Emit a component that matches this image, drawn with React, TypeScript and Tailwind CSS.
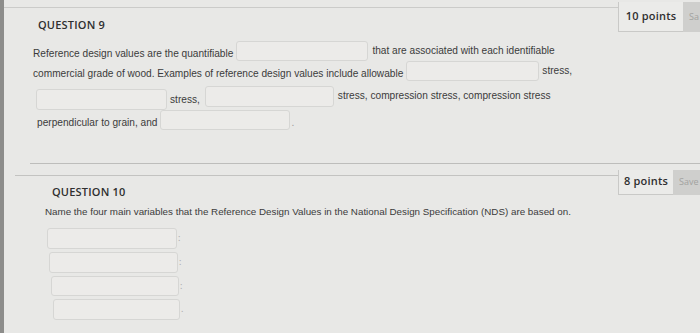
import React from 'react';

const font = "font-['Liberation_Sans',Arial,sans-serif] text-[#3b3b3b] whitespace-nowrap";
const head = "font-['Open_Sans',sans-serif] font-semibold text-[11px] text-[#2f2f2f] tracking-[0.2px]";

function Blank({ w = 'w-[132px]', h = 'h-[20px]' }: { w?: string; h?: string }) {
  return <span className={`inline-block shrink-0 ${w} ${h} rounded-[3px] border border-[#d6d6d4] bg-[#ecebe9]`} />;
}

function Points({ label, save, box, h }: { label: string; save: string; box: string; h: string }) {
  return (
    <div className={`flex ${h} items-stretch`}>
      <div className={`flex ${box} items-center justify-center border-b border-l border-[#c9c9c7] bg-[#ebebe9] ${head} text-[10.5px]`}>
        {label}
      </div>
      <div className="flex min-w-0 flex-1 items-center overflow-hidden bg-[#cfcfcd] pl-[6px] font-['Open_Sans',sans-serif] text-[9px] text-[#a2a2a0]">
        {save}
      </div>
    </div>
  );
}

export default function App() {
  return (
    <div className="flex h-[333px] w-[700px] overflow-hidden bg-[#e8e8e6]">
      <div className="w-[4px] shrink-0 bg-[#8d8d8b]" />
      <div className="flex flex-1 flex-col">
        {/* question 9 */}
        <section className="mt-[7px] border-t border-[#cbcbc9]">
          <div className="flex items-start">
            <div className={`${head} pl-[34px] pt-[9px]`}>QUESTION 9</div>
            <div className="ml-auto -mt-[6px] w-[82px]">
              <Points label="10 points" save="Sa" box="w-[65px]" h="h-[30px]" />
            </div>
          </div>
          <div className={`${font} text-[10.15px] pl-[29px] pt-[10px]`}>
            <div className="flex h-[20px] items-center">
              <span>Reference design values are the quantifiable</span>
              <span className="ml-[3px]"><Blank /></span>
              <span className="ml-[4px] -mt-[6px]">that are associated with each identifiable</span>
            </div>
            <div className="flex h-[20px] items-center">
              <span>commercial grade of wood. Examples of reference design values include allowable</span>
              <span className="ml-[3px]"><Blank w="w-[133px]" /></span>
              <span className="ml-[3px] -mt-[5px]">stress,</span>
            </div>
            <div className="mt-[5px] flex h-[21px] items-center pl-[3px]">
              <Blank w="w-[131px]" h="h-[21px]" />
              <span className="ml-[3px] mt-[2px]">stress,</span>
              <span className="ml-[5px]"><Blank w="w-[129px]" h="h-[21px]" /></span>
              <span className="ml-[4px] -mt-[6px]">stress, compression stress, compression stress</span>
            </div>
            <div className="mt-[3px] flex h-[20px] items-center pl-[4px]">
              <span>perpendicular to grain, and</span>
              <span className="ml-[3px]"><Blank w="w-[130px]" /></span>
              <span className="ml-[1px] text-[#9a9a9a]">.</span>
            </div>
          </div>
          <div className="ml-[26px] mt-[30px] border-t border-[#bdbdbb]" />
        </section>

        {/* question 10 */}
        <section className="mt-[11px] ml-[11px] border-t border-[#c3c3c1]">
          <div className="flex items-start">
            <div className={`${head} pl-[37px] pt-[8px]`}>QUESTION 10</div>
            <div className="ml-auto -mt-[6px] w-[82px]">
              <Points label="8 points" save="Save" box="w-[55px]" h="h-[25px]" />
            </div>
          </div>
          <div className={`${font} text-[9.8px] pl-[30px] pt-[5px]`}>
            Name the four main variables that the Reference Design Values in the National Design Specification (NDS) are based on.
          </div>
          <div className="flex flex-col gap-[3px] pl-[32px] pt-[8px]">
            <div className="flex items-center"><Blank w="w-[130px]" h="h-[21px]" /><span className="ml-[1px] text-[9px] text-[#aaa]">:</span></div>
            <div className="flex items-center pl-[2px]"><Blank w="w-[129px]" h="h-[21px]" /><span className="ml-[1px] text-[9px] text-[#aaa]">:</span></div>
            <div className="flex items-center pl-[4px]"><Blank w="w-[128px]" h="h-[20px]" /><span className="ml-[1px] text-[9px] text-[#aaa]">:</span></div>
            <div className="flex items-center pl-[6px]"><Blank w="w-[127px]" h="h-[21px]" /><span className="ml-[1px] text-[9px] text-[#aaa]">.</span></div>
          </div>
        </section>
      </div>
    </div>
  );
}
